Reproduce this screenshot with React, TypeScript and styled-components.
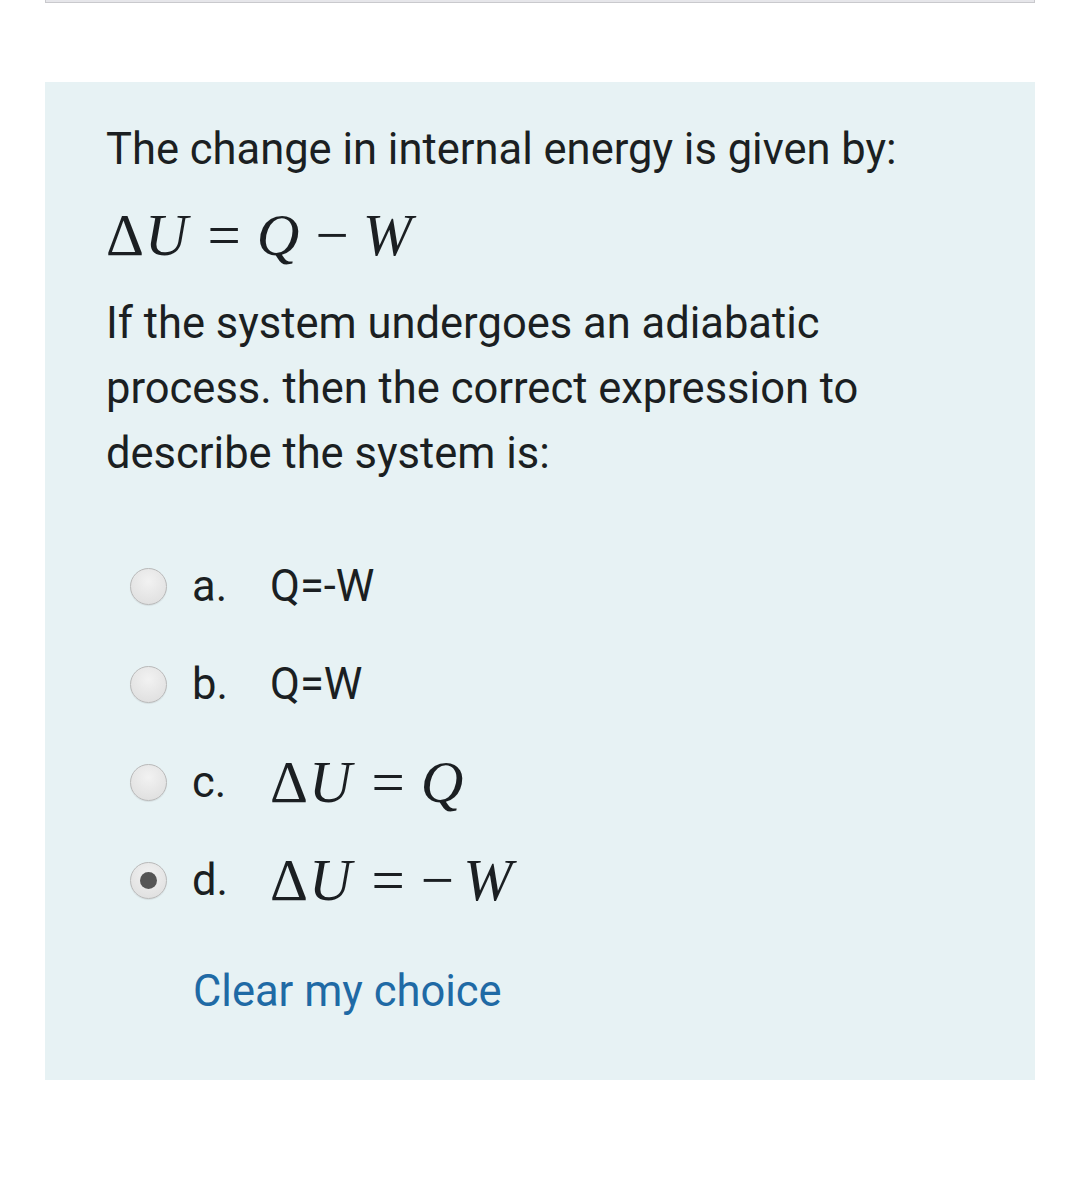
import styled, { createGlobalStyle } from 'styled-components';

const GlobalStyle = createGlobalStyle`
  body {
    margin: 0;
    background: #ffffff;
    font-family: Roboto, 'Noto Sans', sans-serif;
    color: #1b1f22;
  }
`;

type Option = {
  letter: string;
  text?: string;
  math?: { rhs: string; neg?: boolean };
  checked?: boolean;
};

const options: Option[] = [
  { letter: 'a.', text: 'Q=-W' },
  { letter: 'b.', text: 'Q=W' },
  { letter: 'c.', math: { rhs: 'Q' } },
  { letter: 'd.', math: { rhs: 'W', neg: true }, checked: true },
];

const Page = () => (
  <>
    <GlobalStyle />
    <TopEdge />
    <Card>
      <Para>The change in internal energy is given by:</Para>
      <MathLine>
        <Delta>Δ</Delta>
        <Var>U</Var>
        <Op>=</Op>
        <Var>Q</Var>
        <Op $narrow>−</Op>
        <Var>W</Var>
      </MathLine>
      <Para>
        If the system undergoes an adiabatic process. then the correct expression to describe the
        system is:
      </Para>
      <AnswerList>
        {options.map((o) => (
          <AnswerRow key={o.letter}>
            <Radio $checked={!!o.checked} />
            <Letter>{o.letter}</Letter>
            {o.text && <AnswerText>{o.text}</AnswerText>}
            {o.math && (
              <MathInline>
                <Delta>Δ</Delta>
                <Var>U</Var>
                <Op>=</Op>
                {o.math.neg && <Minus>−</Minus>}
                <Var>{o.math.rhs}</Var>
              </MathInline>
            )}
          </AnswerRow>
        ))}
      </AnswerList>
      <ClearLink href="#">Clear my choice</ClearLink>
    </Card>
  </>
);

export default Page;

const TopEdge = styled.div`
  margin: 0 45px;
  height: 2px;
  background: #e6e6ea;
  border: 1px solid #c9c9cd;
  border-top: none;
`;

const Card = styled.div`
  margin: 79px 45px 0;
  background: #e7f2f4;
  padding: 35px 61px 57px;
  height: 998px;
  box-sizing: border-box;
`;

const Para = styled.p`
  margin: 0;
  font-size: 43.5px;
  line-height: 65px;
  color: #1b1f22;
`;

const MathLine = styled.div`
  margin: 21px 0 23px;
  height: 65px;
  display: flex;
  align-items: center;
  font-family: 'Liberation Serif', 'DejaVu Serif', serif;
  font-size: 59px;
  color: #1b1f22;
`;

const MathInline = styled.span`
  display: flex;
  align-items: center;
  font-family: 'Liberation Serif', 'DejaVu Serif', serif;
  font-size: 59px;
`;

const Delta = styled.span`
  font-style: normal;
  margin-right: 1px;
`;

const Var = styled.span`
  font-style: italic;
`;

const Op = styled.span<{ $narrow?: boolean }>`
  margin: 0 ${({ $narrow }) => ($narrow ? '14px' : '16px')} 0
    ${({ $narrow }) => ($narrow ? '16px' : '20px')};
`;

const Minus = styled.span`
  margin-right: 9px;
`;

const AnswerList = styled.div`
  margin-top: 51px;
  display: flex;
  flex-direction: column;
`;

const AnswerRow = styled.div`
  height: 98px;
  display: flex;
  align-items: center;
  padding-left: 24px;
  font-size: 43.5px;
  color: #1b1f22;
`;

const Radio = styled.span<{ $checked: boolean }>`
  width: 35px;
  height: 35px;
  border-radius: 50%;
  border: 1px solid #b9b9b9;
  background: radial-gradient(circle at 50% 35%, #f2f2f2 0%, #dcdcdc 100%);
  box-shadow: 0 1px 1px rgba(0, 0, 0, 0.08);
  display: flex;
  align-items: center;
  justify-content: center;
  margin-right: 25px;
  flex-shrink: 0;

  &::after {
    content: '';
    display: ${({ $checked }) => ($checked ? 'block' : 'none')};
    width: 17px;
    height: 17px;
    border-radius: 50%;
    background: #555;
  }
`;

const Letter = styled.span`
  width: 78px;
`;

const AnswerText = styled.span``;

const ClearLink = styled.a`
  display: block;
  margin: 30px 0 0 87px;
  font-size: 43.5px;
  line-height: 65px;
  color: #1f6aa5;
  text-decoration: none;
`;
